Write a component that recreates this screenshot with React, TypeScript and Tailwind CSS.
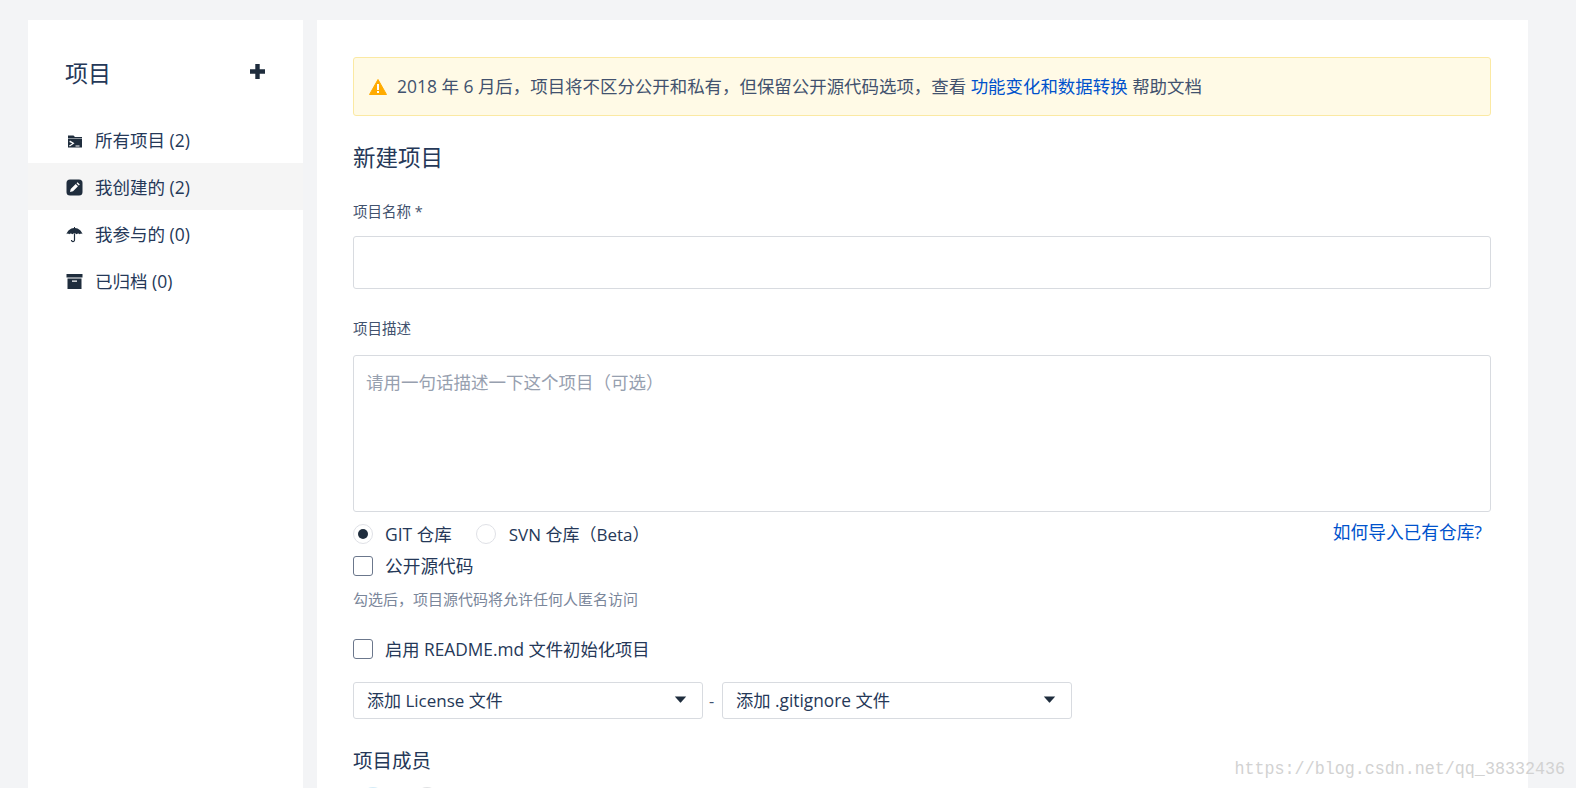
import React from "react";

const F = '"Open Sans","Noto Sans CJK SC",sans-serif';

function NavItem({ icon, label, active }: { icon: React.ReactNode; label: string; active?: boolean }) {
  return (
    <div className={`flex h-[47px] items-center pl-[38px] pt-[2px] text-[17.500px] text-[#253858] ${active ? "bg-[#f5f5f5]" : ""}`}>
      <span className="flex w-[17px] justify-center">{icon}</span>
      <span className="ml-[12px]">{label}</span>
    </div>
  );
}

const FolderIcon = (
  <svg width="16" height="16" viewBox="0 0 16 16" fill="#1f2d3d">
    <path d="M1 2.500h5.500l1.500 1.500H15v1.500H1z" />
    <path fillRule="evenodd" d="M1 6h14v8.500H1zM3 7.500L2.300 9l3 1.500-3.300 2 .8 1L7.500 10.300zM8.500 12.500v1h4v-1z" />
  </svg>
);
const EditIcon = (
  <svg width="17" height="17" viewBox="0 0 17 17">
    <rect x="0.500" y="0.500" width="16" height="16" rx="3.500" fill="#1f2d3d" />
    <path d="M4 13l.7-3 5-5 2.300 2.300-5 5zM10.500 4.200l1-1 2.300 2.300-1 1z" fill="#fff" />
  </svg>
);
const UmbrellaIcon = (
  <svg width="17" height="17" viewBox="0 0 17 17" fill="#1f2d3d">
    <path d="M8 1h1v1c3.600.3 6.700 2.800 7.500 6.300-.9-1-1.800-1-2.700 0-.9-1-2.300-1-3.200 0-.7-.8-1.400-1-2.100-1s-1.400.2-2.100 1c-.9-1-2.300-1-3.200 0-.9-1-1.800-1-2.700 0C1.300 4.800 4.400 2.300 8 2z" />
    <path d="M7.900 7.500h1.200v6.300c0 1.500-.9 2.400-2.100 2.400s-2.100-.9-2.100-2.200h1.200c0 .7.300 1.100.9 1.100s.900-.5.900-1.300z" />
  </svg>
);
const ArchiveIcon = (
  <svg width="17" height="17" viewBox="0 0 17 17" fill="#1f2d3d">
    <path d="M0.500 1h16v3.500H.5z" />
    <path fillRule="evenodd" d="M1.500 5.500h14V16h-14zM6 7.500v1.300h5V7.500z" />
  </svg>
);
const Caret = () => (
  <svg width="13" height="7" viewBox="0 0 13 7" fill="#1f2d3d" className="mb-[3px] shrink-0">
    <path d="M.8.500h11.400L7.100 6.300a.8.800 0 0 1-1.200 0z" />
  </svg>
);

export default function App() {
  return (
    <div
      className="relative flex h-[788px] gap-[14px] overflow-hidden bg-[#f3f4f6] pl-[28px] pr-[48px] pt-[20px] text-[#253858]"
      style={{ fontFamily: F }}
    >
      <aside className="h-[900px] w-[275px] shrink-0 bg-white">
        <div className="flex h-[96px] items-center justify-between pl-[37px] pr-[38px] pt-[10px]">
          <span className="text-[23px]">项目</span>
          <svg width="15" height="15" viewBox="0 0 15 15" fill="#1f2d3d" className="mb-[3px]">
            <path d="M5.300 0h4.400v5.300H15v4.400H9.700V15H5.300V9.700H0V5.300h5.300z" />
          </svg>
        </div>
        <div>
          <NavItem icon={FolderIcon} label="所有项目 (2)" />
          <NavItem icon={EditIcon} label="我创建的 (2)" active />
          <NavItem icon={UmbrellaIcon} label="我参与的 (0)" />
          <NavItem icon={ArchiveIcon} label="已归档 (0)" />
        </div>
      </aside>

      <main className="h-[900px] flex-1 bg-white pl-[36px] pr-[37px] pt-[37px]">
        <div className="flex h-[59px] items-center rounded-[3px] border border-[#fbe9a3] bg-[#fffae6] pl-[15px] text-[17.450px] text-[#42526e]">
          <svg width="18" height="16" viewBox="0 0 18 16" className="mr-[10px] shrink-0">
            <path d="M9 0.500L17.500 15.500H0.500z" fill="#ffab00" stroke="#ffab00" strokeLinejoin="round" />
            <path d="M8 5h2v6H8zM8 12h2v2H8z" fill="#fff" />
          </svg>
          <span>
            2018 年 6 月后，项目将不区分公开和私有，但保留公开源代码选项，查看{" "}
            <span className="text-[#0052cc]">功能变化和数据转换</span> 帮助文档
          </span>
        </div>

        <h2 className="mt-[24px] text-[22.500px] leading-[36px]">新建项目</h2>

        <div className="mt-[26px] text-[14.500px] leading-[20px] text-[#42526e]">项目名称 *</div>
        <div className="mt-[14px] h-[53px] rounded-[3px] border border-[#d8dbe0]" />

        <div className="mt-[30px] text-[14.500px] leading-[20px] text-[#42526e]">项目描述</div>
        <div className="mt-[16px] h-[157px] rounded-[3px] border border-[#d8dbe0] px-[12px] py-[12px] text-[17.500px] leading-[28px] text-[#97a0af]">
          请用一句话描述一下这个项目（可选）
        </div>

        <div className="mt-[11px] flex h-[22px] items-center text-[17.500px]">
          <span className="flex h-[20px] w-[20px] items-center justify-center rounded-full border border-[#dfe1e6]">
            <span className="h-[10px] w-[10px] rounded-full bg-[#1f2d3d]" />
          </span>
          <span className="ml-[12px]">GIT 仓库</span>
          <span className="ml-[24px] h-[20px] w-[20px] rounded-full border border-[#dfe1e6]" />
          <span className="ml-[13px] translate-y-[1px] text-[17px]">SVN 仓库（Beta）</span>
          <span className="ml-auto mr-[9px] -translate-y-[2px] text-[17.700px] text-[#0052cc]">如何导入已有仓库?</span>
        </div>

        <div className="mt-[10px] flex h-[22px] items-center text-[17.700px]">
          <span className="h-[20px] w-[20px] rounded-[3px] border border-[#6b778c]" />
          <span className="ml-[12px]">公开源代码</span>
        </div>
        <div className="mt-[12px] text-[15px] leading-[20px] text-[#7a869a]">勾选后，项目源代码将允许任何人匿名访问</div>

        <div className="mt-[30px] flex h-[24px] items-center text-[17.300px]">
          <span className="-mt-[4px] h-[20px] w-[20px] rounded-[3px] border border-[#6b778c]" />
          <span className="mb-[2px] ml-[12px]">启用 README.md 文件初始化项目</span>
        </div>

        <div className="mt-[19px] flex items-center">
          <div className="flex h-[37px] w-[350px] items-center justify-between rounded-[3px] border border-[#d8dbe0] pl-[13px] pr-[15px] text-[17px]">
            <span>添加 License 文件</span>
            <Caret />
          </div>
          <span className="mx-[6px] w-[7px] text-[#42526e]">-</span>
          <div className="flex h-[37px] w-[350px] items-center justify-between rounded-[3px] border border-[#d8dbe0] pl-[13px] pr-[15px] text-[17.300px]">
            <span>添加 .gitignore 文件</span>
            <Caret />
          </div>
        </div>

        <div className="mt-[28px] text-[19.500px] leading-[28px]">项目成员</div>
        <div className="mt-[12px] flex gap-[30px] pl-[8px]">
          <span className="h-[24px] w-[24px] rounded-full bg-[#d5ecf7]" />
          <span className="h-[24px] w-[24px] rounded-full bg-[#e0e1e3]" />
        </div>
      </main>

      <div className="absolute right-[11px] top-[756px] origin-center scale-y-[1.15] font-['Liberation_Mono'] text-[16.700px] text-[#d2d2d2]">
        https://blog.csdn.net/qq_38332436
      </div>
    </div>
  );
}
